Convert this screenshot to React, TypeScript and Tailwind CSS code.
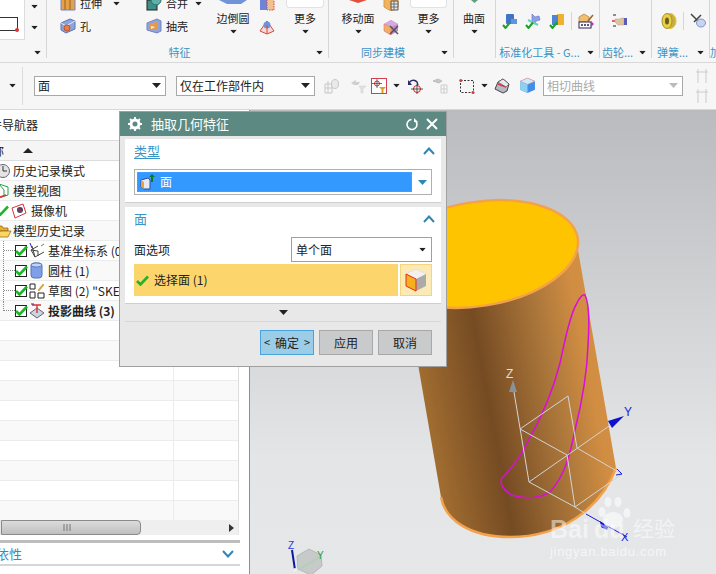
import { type ReactNode } from "react";

const Caret = ({ className = "" }: { className?: string }) => (
  <svg width="9" height="5" viewBox="0 0 9 5" className={`shrink-0 ${className}`}>
    <path d="M0 0h9L4.500 5z" fill="#222" />
  </svg>
);

const Chevron = ({ down = false }: { down?: boolean }) => (
  <svg width="12" height="8" viewBox="0 0 12 8" className="shrink-0">
    <path d={down ? "M1 1l5 5.500L11 1" : "M1 7l5-5.500L11 7"} fill="none" stroke="#2f86b5" strokeWidth="2" />
  </svg>
);

const Ic = ({ children, className = "" }: { children: ReactNode; className?: string }) => (
  <svg width="16" height="16" viewBox="0 0 16 16" className={`shrink-0 ${className}`}>{children}</svg>
);

const GreenTick = () => <path d="M1 12l2.500 3L8 9.500" fill="none" stroke="#1f9f2a" strokeWidth="2" />;

// ribbon icons
const IconExtrude = () => (
  <Ic>
    <path d="M1 1h14v14H1z" fill="#e3a24a" stroke="#6f84c8" />
    <path d="M5 1v14M10 1v14" stroke="#b5762a" strokeWidth="1.500" />
  </Ic>
);
const IconHole = () => (
  <Ic>
    <path d="M1 5l9-4 5 2v8l-9 4-5-3z" fill="#8ea4de" stroke="#5f74b0" />
    <path d="M1 5l5 3 9-5" fill="none" stroke="#dfe6f8" />
    <circle cx="7" cy="10" r="3" fill="#e8803a" stroke="#c05030" />
  </Ic>
);
const IconUnite = () => (
  <Ic>
    <rect x="1" y="5" width="10" height="10" fill="#3d8f88" stroke="#222" />
    <circle cx="10" cy="5" r="5" fill="#5fb0a8" stroke="#2a6f6a" />
  </Ic>
);
const IconShell = () => (
  <Ic>
    <path d="M1 5l10-4 4 2v10l-4 2-10-3z" fill="#8ea4de" stroke="#6f84c8" />
    <path d="M4 6l8-3v9l-8-1z" fill="#e59a4a" />
    <path d="M5 8l4 1-4 2z" fill="#fff2d8" />
  </Ic>
);
const IconEdge = () => (
  <Ic>
    <path d="M1 5h8v10H1z" fill="#6f84d8" />
    <path d="M8 3h7v12H8z" fill="#f0c090" stroke="#d84a3a" strokeDasharray="1.500 1" />
    <path d="M1 5l3-3h8l-3 3z" fill="#d8a0b0" />
  </Ic>
);
const IconCone = () => (
  <Ic>
    <path d="M8 2L1 12l7 3 7-3z" fill="#f5d8d8" stroke="#d84a3a" />
    <circle cx="8" cy="6" r="3.500" fill="#6f94d8" />
    <path d="M8 6v9" stroke="#d84a3a" />
  </Ic>
);
const IconMoveTop = () => (
  <Ic>
    <path d="M1 3l7-3 7 3v9l-7 4-7-4z" fill="#f2b25a" stroke="#d89a4a" />
    <path d="M8 6h7v9H8z" fill="#e8e8e8" stroke="#555" />
    <path d="M8 9h7M8 12h7M11 6v9" stroke="#555" strokeWidth=".8" />
  </Ic>
);
const IconDeleteFace = () => (
  <Ic>
    <path d="M1 5l7-4 7 4v7l-7 4-7-4z" fill="#c58ac8" />
    <path d="M1 5l7-4 7 4-7 3z" fill="#d8a8e0" />
    <path d="M1 5l7 3v8l-7-4z" fill="#efb060" stroke="#e8809a" strokeWidth=".7" />
    <path d="M7 7l8 8M15 7l-8 8" stroke="#555" strokeWidth="1.500" />
  </Ic>
);
const IconStd1 = () => (
  <Ic>
    <rect x="4" y="1" width="8" height="10" rx="1" fill="#3f74c8" />
    <path d="M9 6h6v5H9z" fill="#5f94e0" />
    <GreenTick />
  </Ic>
);
const IconStd2 = () => (
  <Ic>
    <path d="M7 1l3 3 4-1 1 4-4 1-1 3-3-2z" fill="#8f9fe8" stroke="#5f6fc8" strokeWidth=".6" />
    <path d="M3 7l10 5" stroke="#68d0c0" strokeWidth="2" />
    <GreenTick />
  </Ic>
);
const IconStd3 = () => (
  <Ic>
    <path d="M8 1h7v11H8z" fill="#f0b030" />
    <path d="M3 2h6v10H3z" fill="#4f84d0" />
    <GreenTick />
  </Ic>
);
const IconStd4 = () => (
  <svg width="17" height="17" viewBox="0 0 17 17" className="shrink-0">
    <path d="M1 4l5-3 5 3v5H1z" fill="#eebf70" stroke="#c89a50" />
    <rect x="1" y="9" width="12" height="6" fill="#fff" stroke="#332255" />
    <path d="M3 12h2M6 12h2M9 12h2" stroke="#332255" strokeWidth="1.500" />
    <path d="M13 8l3 3-3 3z" fill="#c030c0" />
    <path d="M10 8l5-6" stroke="#a06030" strokeWidth="1.500" />
  </svg>
);
const IconGear = () => (
  <Ic>
    <path d="M1 2h3M1 13h3" stroke="#222" />
    <path d="M0 8h4" stroke="#d33" strokeWidth="1.500" />
    <path d="M3 6h5l1-1h3v7H6L3 9z" fill="#dcc4a0" stroke="#b8a080" strokeWidth=".5" />
    <rect x="12" y="5" width="3" height="7" fill="#5a5ab8" />
  </Ic>
);
const IconSpring = () => (
  <Ic>
    <ellipse cx="9" cy="8" rx="6" ry="7.500" fill="#c8b040" stroke="#e0c030" />
    <ellipse cx="6" cy="8" rx="5" ry="7.500" fill="#e8d040" stroke="#a89030" />
    <ellipse cx="6" cy="8" rx="2" ry="3.500" fill="#6a5a2a" />
  </Ic>
);
const IconScissor = () => (
  <Ic>
    <path d="M1 1l10 10M11 2L4 9" stroke="#444" strokeWidth="1.500" />
    <ellipse cx="11" cy="10" rx="4.500" ry="4" fill="#c8d4ee" stroke="#7f94c8" />
  </Ic>
);

function Group({ width, label, children, caret = true }: { width: number; label?: string; children?: ReactNode; caret?: boolean }) {
  return (
    <div className="relative h-[58px] shrink-0 border-r border-[#d6d6d6]" style={{ width }}>
      <div className="flex h-[46px] overflow-hidden">{children}</div>
      <div className="flex h-[12px] items-center justify-center whitespace-nowrap pr-[16px] text-[11px] leading-none text-[#3b93c7]">
        {label}
      </div>
      {caret && <Caret className="absolute bottom-[3px] right-[4px] scale-75" />}
    </div>
  );
}

const BigBtn = ({ text, w, ml, box = false, top }: { text: string; w: number; ml: number; box?: boolean; top?: ReactNode }) => (
  <div className="flex shrink-0 flex-col items-center whitespace-nowrap" style={{ width: w, marginLeft: ml }}>
    <div className={`flex h-[8px] w-full justify-center overflow-hidden ${box ? "rounded-b border border-t-0 border-[#e2e2e2] bg-white" : ""}`}>{top}</div>
    <div className="mt-[3px] text-[11px] leading-[14px] text-[#222]">{text}</div>
    <Caret className="mt-[4px] scale-75" />
  </div>
);

const SmallRow = ({ icon, text, children }: { icon: ReactNode; text: string; children?: ReactNode }) => (
  <div className="flex h-[14px] items-center gap-[4px] whitespace-nowrap text-[11px]">
    {icon}
    {text}
    {children}
  </div>
);

function Ribbon() {
  return (
    <div className="flex h-[62px] shrink-0 overflow-hidden bg-[#f6f6f6] text-[#222]">
      <Group width={47}>
        <div className="flex w-full">
          <div className="-mt-[4px] h-[44px] w-[25px] border border-l-0 border-[#dcdcdc] bg-white pt-[20px]">
            <div className="relative h-[14px] w-[18px] border-y border-r border-[#333]">
              <span className="absolute -bottom-[2px] -right-[2px] h-[4px] w-[4px] rounded-full bg-[#d33]" />
            </div>
          </div>
          <div className="ml-[5px] flex flex-col gap-[16px] pt-[4px]">
            <Caret className="scale-75" />
            <Caret className="scale-75" />
          </div>
        </div>
      </Group>
      <Group width={282} label="特征">
        <div className="-mt-[4px] ml-[13px] flex w-[86px] shrink-0 flex-col gap-[9px]">
          <SmallRow icon={<IconExtrude />} text="拉伸"><Caret className="ml-[6px] scale-75" /></SmallRow>
          <SmallRow icon={<IconHole />} text="孔" />
        </div>
        <div className="-mt-[4px] flex w-[68px] shrink-0 flex-col gap-[9px]">
          <SmallRow icon={<IconUnite />} text="合并"><Caret className="ml-[2px] scale-75" /></SmallRow>
          <SmallRow icon={<IconShell />} text="抽壳" />
        </div>
        <BigBtn
          text="边倒圆"
          w={34}
          ml={2}
          top={<svg width="28" height="5" viewBox="0 0 28 5" className="shrink-0"><path d="M0 0h28l-6 4H8z" fill="#6f94d8" /></svg>}
        />
        <div className="-mt-[5px] ml-[9px] flex w-[16px] shrink-0 flex-col gap-[8px]">
          <IconEdge />
          <IconCone />
        </div>
        <BigBtn text="更多" w={38} ml={11} box />
      </Group>
      <Group width={125} label="同步建模">
        <BigBtn
          text="移动面"
          w={36}
          ml={11}
          top={<svg width="18" height="3" viewBox="0 0 18 3" className="shrink-0"><path d="M0 0h18l-9 3z" fill="#e0503a" /></svg>}
        />
        <div className="-mt-[5px] ml-[7px] flex w-[16px] shrink-0 flex-col gap-[8px]">
          <IconMoveTop />
          <IconDeleteFace />
        </div>
        <BigBtn text="更多" w={37} ml={11} box />
      </Group>
      <Group width={42} caret={false}>
        <BigBtn
          text="曲面"
          w={30}
          ml={5}
          top={<svg width="7" height="3" viewBox="0 0 7 3" className="shrink-0"><path d="M0 0h7L3.500 3z" fill="#5fa080" /></svg>}
        />
      </Group>
      <Group width={104} label="标准化工具 - G...">
        <div className="flex items-center pb-[4px] pl-[6px]">
          <IconStd1 />
          <span className="ml-[7px]"><IconStd2 /></span>
          <span className="ml-[8px]"><IconStd3 /></span>
          <span className="ml-[6px] h-[18px] w-px bg-[#d6d6d6]" />
          <span className="ml-[6px]"><IconStd4 /></span>
        </div>
      </Group>
      <Group width={52} label="齿轮...">
        <div className="flex items-center pb-[4px] pl-[12px]">
          <IconGear />
        </div>
      </Group>
      <Group width={58} label="弹簧...">
        <div className="flex items-center pb-[4px] pl-[9px]">
          <IconSpring />
          <span className="ml-[6px] h-[18px] w-px bg-[#d6d6d6]" />
          <span className="ml-[6px]"><IconScissor /></span>
        </div>
      </Group>
      <div className="w-[7px] shrink-0 overflow-hidden whitespace-nowrap pt-[46px] text-[11px] leading-[12px] text-[#3b93c7]">加</div>
    </div>
  );
}

const Select = ({ text, w, ml, disabled = false }: { text: string; w: number; ml: number; disabled?: boolean }) => (
  <div
    className={`flex h-[20px] shrink-0 items-center justify-between border border-[#a8a8a8] bg-white pl-[3px] pr-[4px] text-[12px] ${disabled ? "text-[#aaa]" : "text-[#222]"}`}
    style={{ width: w, marginLeft: ml }}
  >
    {text}
    <Caret className={disabled ? "opacity-30" : ""} />
  </div>
);

function Toolbar() {
  return (
    <div className="flex h-[48px] shrink-0 items-center border-y border-y-[#d8d8d8] bg-[#f6f6f6] pb-[1px]">
      <span className="ml-[-4px] w-[10px] text-[12px] text-[#222]">)</span>
      <Caret className="ml-[2px] scale-75" />
      <span className="ml-[5px] h-[38px] w-px bg-[#dcdcdc]" />
      <Select text="面" w={132} ml={11} />
      <Select text="仅在工作部件内" w={139} ml={10} />
      <Ic className="ml-[9px] opacity-50">
        <path d="M1 6h7v9H1zM1 10h7M4 3v12" fill="none" stroke="#999" />
        <ellipse cx="11" cy="6" rx="3.500" ry="4.500" fill="#ddd" stroke="#999" />
      </Ic>
      <Ic className="ml-[11px] opacity-50">
        <path d="M0 5l5-3v2h4l-2 3H3" fill="#aaa" />
        <path d="M8 8h7l-3 3v4h-2v-4z" fill="#ccc" stroke="#aaa" strokeWidth=".5" />
      </Ic>
      <span className="ml-[4px] flex h-[16px] w-[16px] shrink-0 items-center justify-center border border-[#d04050] bg-white">
        <svg width="14" height="14" viewBox="0 0 14 14">
          <circle cx="5" cy="4.500" r="2.500" fill="none" stroke="#c33" />
          <path d="M5 0v9M0 4.500h10" stroke="#333" strokeWidth=".7" />
          <path d="M7 8h7l-2.500 2.500V14h-2v-3.500z" fill="#e0a020" />
        </svg>
      </span>
      <Caret className="ml-[5px] scale-75" />
      <Ic className="ml-[7px]">
        <circle cx="9" cy="11" r="3.500" fill="none" stroke="#d22" />
        <path d="M9 6v10M3 11h12" stroke="#333" strokeWidth=".8" />
        <path d="M1 6a4.500 4.500 0 0 1 8-2l1 3" fill="none" stroke="#2a2a6a" strokeWidth="1.400" />
        <path d="M0 2v5h4z" fill="#2a2a6a" />
      </Ic>
      <Ic className="ml-[8px] opacity-50">
        <path d="M1 3l5-2 4 2-3 2z" fill="#999" stroke="#888" />
        <path d="M9 7h6v8H9zM12 7v8M9 11h6" fill="none" stroke="#aaa" />
      </Ic>
      <Ic className="ml-[11px]">
        <rect x="1.500" y="2.500" width="13" height="12" fill="none" stroke="#333" strokeDasharray="2 1.500" />
        <circle cx="1.800" cy="2.500" r="1.500" fill="#d33" />
        <circle cx="14" cy="14.500" r="1.500" fill="#d33" />
      </Ic>
      <Caret className="ml-[5px] scale-75" />
      <Ic className="ml-[5px]">
        <path d="M1 11l3-7 5-3 6 5-2 7-4 2z" fill="#b8b8c4" stroke="#444" />
        <path d="M4 6l8 3" stroke="#e03040" strokeWidth="1.500" />
        <path d="M4 4l5-3 6 5-3 3z" fill="#e8e8ee" stroke="#444" strokeWidth=".6" />
      </Ic>
      <svg width="17" height="17" viewBox="0 0 16 16" className="ml-[9px] shrink-0">
        <path d="M8 1l7 3v8l-7 3-7-3V4z" fill="#3f8fe8" />
        <path d="M8 1l7 3-7 3-7-3z" fill="#cfeaf8" stroke="#e08090" strokeWidth=".5" />
        <path d="M1 4l7 3v8l-7-3z" fill="#8fd0f0" />
      </svg>
      <Select text="相切曲线" w={140} ml={7} disabled />
      <div className="ml-[11px] flex flex-col gap-[4px]">
        <Ic><path d="M4 1v14M12 1v14M2 4h12" stroke="#ccc" /></Ic>
        <Ic><path d="M4 1v14M12 1v14M2 4h12" stroke="#ccc" /></Ic>
      </div>
    </div>
  );
}

type Row = { text: string; bold?: boolean; kind: "top" | "cam" | "child"; icon: ReactNode; last?: boolean };

const rows: Row[] = [
  { text: "历史记录模式", kind: "top", icon: <Ic><circle cx="6" cy="8" r="6.500" fill="#e4e4e4" stroke="#667" /><path d="M6 3v5h4" stroke="#333" fill="none" /></Ic> },
  { text: "模型视图", kind: "top", icon: <Ic><path d="M2 1l9 3v8l-9 3z" fill="#fff" stroke="#2a9f4a" /><path d="M2 1l5 6v6" fill="none" stroke="#2a9f4a" /><path d="M0 15l9-3" stroke="#d33" strokeWidth="1.500" /></Ic> },
  { text: "摄像机", kind: "cam", icon: <Ic><path d="M1 5l11-4 3 9-11 5z" fill="#fff" stroke="#d33" /><circle cx="9" cy="7" r="3" fill="#446" /><path d="M6 5l5 4" stroke="#d33" /></Ic> },
  { text: "模型历史记录", kind: "top", icon: <Ic><path d="M0 3h5l1 2h5v3H3L1 14H0z" fill="#e8b030" stroke="#8a6010" strokeWidth=".7" /><path d="M1 14l2-6h11l-3 6z" fill="#f8d860" stroke="#8a6010" strokeWidth=".7" /></Ic> },
  { text: "基准坐标系 (0)", kind: "child", icon: <Ic><path d="M3 3l3 11 9-5M6 14L2 7l7 1v5M2 7l7-4" fill="none" stroke="#444" /><path d="M1 0l2 5" stroke="#22c" /><path d="M12 3l3-2" stroke="#2a2" /></Ic> },
  { text: "圆柱 (1)", kind: "child", icon: <svg width="13" height="17" viewBox="0 0 13 17" className="shrink-0"><rect x="1" y="1" width="11" height="15" rx="3" fill="#7f9fe8" stroke="#5577bb" /><ellipse cx="6.500" cy="3" rx="5.500" ry="2" fill="#c0d4f5" stroke="#5577bb" /></svg> },
  { text: "草图 (2) \"SKETCH_000\"", kind: "child", icon: <Ic><path d="M1 1h5v5H1zM1 9h5v6H1zM9 10h6v5H9z" fill="#fff" stroke="#222" /><path d="M9 7l5-6 1 1-5 6z" fill="#e8b030" stroke="#a07010" strokeWidth=".4" /></Ic> },
  { text: "投影曲线 (3)", kind: "child", bold: true, last: true, icon: <Ic><path d="M1 10l7-5 7 5-7 5z" fill="#c8d4e0" stroke="#667" /><path d="M3 2h9M8 2v8" stroke="#d33" strokeWidth="1.400" /><path d="M2 1h3" stroke="#22c" /></Ic> },
];

const Check = () => (
  <svg width="13" height="11" viewBox="0 0 13 11" className="shrink-0">
    <path d="M1 6l3.500 3.500L12 1.500" fill="none" stroke="#1fb52a" strokeWidth="2.600" />
  </svg>
);

function Navigator() {
  return (
    <div className="flex h-[464px] w-[250px] shrink-0 flex-col overflow-hidden border-r border-[#8f8f8f] bg-white">
      <div className="flex h-[30px] shrink-0 items-center text-[12px] text-[#222]">
        <span className="ml-[-10px] whitespace-nowrap">件导航器</span>
      </div>
      <div className="flex h-[21px] w-[239px] shrink-0 items-center border-y border-[#dcdcdc] bg-[#f5f5f5] text-[12px] text-[#222]">
        <span className="ml-[-20px] whitespace-nowrap">名称</span>
        <svg width="10" height="5" viewBox="0 0 10 5" className="ml-[19px]"><path d="M0 5h10L5 0z" fill="#222" /></svg>
      </div>
      <div className="h-[359px] w-[239px] shrink-0 overflow-hidden border-r border-[#dcdcdc]">
        {Array.from({ length: 18 }).map((_, i) => {
          const r = rows[i];
          return (
            <div key={i} className={`flex h-[20px] items-center border-b border-[#ececec] ${i % 2 ? "bg-[#f9f9f9]" : "bg-white"}`}>
              <div className="flex h-full w-[174px] shrink-0 items-center overflow-hidden whitespace-nowrap border-r border-[#ececec] text-[12px] text-[#222]">
                {r?.kind === "top" && (
                  <div className="ml-[-3px] flex items-center">
                    {r.icon}
                    <span>{r.text}</span>
                  </div>
                )}
                {r?.kind === "cam" && (
                  <div className="ml-[-4px] flex items-center">
                    <Check />
                    <span className="ml-[2px]">{r.icon}</span>
                    <span className="ml-[4px]">{r.text}</span>
                  </div>
                )}
                {r?.kind === "child" && (
                  <div className={`ml-[3px] flex h-full items-center ${r.bold ? "font-bold" : ""}`}>
                    <span className={`w-[12px] shrink-0 border-l border-dotted border-[#888] ${r.last ? "h-[10px] self-start" : "flex h-full items-center"}`}>
                      {!r.last && <span className="w-full border-t border-dotted border-[#888]" />}
                      {r.last && <span className="mt-[9px] block w-full border-t border-dotted border-[#888]" />}
                    </span>
                    <span className="flex h-[12px] w-[12px] shrink-0 items-center justify-center border border-[#222] bg-white"><Check /></span>
                    <span className="ml-[2px] flex w-[15px] justify-center">{r.icon}</span>
                    <span className="ml-[4px]">{r.text}</span>
                  </div>
                )}
              </div>
            </div>
          );
        })}
      </div>
      <div className="flex h-[15px] w-[239px] shrink-0 items-center border-x border-[#e6e6e6] bg-[#efefef]">
        <div className="flex h-[15px] w-[140px] items-center justify-end rounded-r-sm border border-[#8a8a8a] bg-gradient-to-b from-[#dcdcdc] to-[#bfbfbf] pr-[69px]">
          <svg width="8" height="7" viewBox="0 0 8 7"><path d="M1 0v7M4 0v7M7 0v7" stroke="#777" /></svg>
        </div>
        <svg width="5" height="8" viewBox="0 0 5 8" className="ml-[88px]"><path d="M0 0l5 4-5 4z" fill="#333" /></svg>
      </div>
      <div className="mt-[5px] h-[3px] w-[240px] shrink-0 bg-[#bdbdbd]" />
      <div className="flex h-[23px] w-[240px] shrink-0 items-center justify-between border-b-2 border-[#d6d6d6] pr-[6px] text-[13px] text-[#2f8fc4]">
        <span className="ml-[-17px] whitespace-nowrap">相依性</span>
        <Chevron down />
      </div>
    </div>
  );
}

function Scene() {
  return (
    <svg viewBox="250 110 466 464" className="absolute inset-0 h-full w-full">
      <defs>
        <linearGradient id="bg" x1="0" y1="0" x2="0" y2="1">
          <stop offset="0" stopColor="#b9bbbe" />
          <stop offset="0.75" stopColor="#e4e5e7" />
          <stop offset="1" stopColor="#e6e7e9" />
        </linearGradient>
        <linearGradient id="cyl" gradientUnits="userSpaceOnUse" x1="425" y1="400" x2="610" y2="365">
          <stop offset="0" stopColor="#a06c30" />
          <stop offset="0.33" stopColor="#754b23" />
          <stop offset="0.7" stopColor="#b07a3c" />
          <stop offset="0.88" stopColor="#d18d42" />
          <stop offset="1" stopColor="#d39045" />
        </linearGradient>
      </defs>
      <rect x="250" y="110" width="466" height="464" fill="url(#bg)" />
      <path d="M400 260 L578 250 L616 468 C600 510 560 537 510 537 C470 537 445 520 441 497 Z" fill="url(#cyl)" />
      <path d="M441 497C445 520 470 537 510 537C560 537 600 510 616 468" fill="none" stroke="#f4a24a" strokeWidth="2.500" />
      <ellipse cx="478" cy="254" rx="101" ry="52" transform="rotate(-9 478 254)" fill="#ffc400" stroke="#f4a24a" strokeWidth="2.500" />
      <path
        d="M585 295C590 305 589 330 588 345C587 375 580 410 575 430C570 455 565 475 550 492C540 498 525 500 512 495C504 491 499 484 502 478C510 470 520 458 527 443C540 420 552 395 560 363C565 340 570 315 577 303C580 297 583 294 585 295Z"
        fill="none"
        stroke="#d80fd8"
        strokeWidth="1.500"
      />
      <path
        d="M529 482L514 392M520 429L568 396L577 448L622 474L575 507L529 482M520 429L567 455L575 507M529 482L612 424M575 507L586 514"
        fill="none"
        stroke="#d4d4d4"
        strokeWidth="1"
      />
      <path d="M513 380l-4 12h8z" fill="#8a9298" />
      <path d="M624 416l-16 5 4 7z" fill="#1010d0" />
      <path d="M622 474l-5-5M622 474l-6 1M586 514l41 23" fill="none" stroke="#1818e0" strokeWidth="1" />
      <path d="M608 527l-8-6 1 6 6 3z" fill="#1010d0" />
      <text x="506" y="378" fontSize="12" fill="#ddd" fontFamily="Liberation Sans, sans-serif">Z</text>
      <text x="624" y="416" fontSize="12" fill="#2020e0" fontFamily="Liberation Sans, sans-serif">Y</text>
      <text x="621" y="541" fontSize="11" fill="#2020e0" fontFamily="Liberation Sans, sans-serif">X</text>
      <g fill="#fff" fillOpacity="0.55">
        <ellipse cx="613" cy="520" rx="10" ry="8" />
        <ellipse cx="602" cy="512" rx="3.500" ry="5" />
        <ellipse cx="608" cy="502" rx="3.500" ry="5" />
        <ellipse cx="618" cy="502" rx="3.500" ry="5" />
        <ellipse cx="627" cy="513" rx="3.500" ry="5" />
      </g>
      <text x="550" y="538" fontSize="25" fontWeight="700" fill="#fff" fillOpacity="0.5" fontFamily="Liberation Sans, sans-serif">Bai</text>
      <text x="594" y="538" fontSize="25" fontWeight="700" fill="#fff" fillOpacity="0.5" fontFamily="Liberation Sans, sans-serif">du</text>
      <text x="633" y="536" fontSize="21" fill="#fff" fillOpacity="0.55" fontFamily="Noto Sans CJK SC, sans-serif">经验</text>
      <text x="550" y="556" fontSize="13" letterSpacing="0.700" fill="#fff" fillOpacity="0.65" fontFamily="Liberation Sans, sans-serif">jingyan.baidu.com</text>
      <path d="M297 556l12-7 12 6 1 11-11 9-13-6z" fill="#c6cac8" stroke="#b5b8b8" />
      <path d="M298 570l22-13" stroke="#b5cfb5" strokeWidth="1.500" />
      <path d="M292 550l3 20" stroke="#1018a0" strokeWidth="2" />
      <circle cx="295" cy="570" r="2" fill="#eee" />
      <text x="288" y="549" fontSize="10" fill="#2040e0" fontFamily="Liberation Sans, sans-serif">Z</text>
      <text x="317" y="559" fontSize="10" fill="#30a030" fontFamily="Liberation Sans, sans-serif">Y</text>
    </svg>
  );
}

const DlgButton = ({ children, primary = false }: { children: ReactNode; primary?: boolean }) => (
  <div className={`flex h-[25px] w-[54px] items-center justify-center border text-[12px] text-[#222] ${primary ? "border-[#4aa3d8] bg-[#9ccde8]" : "border-[#a8a8a8] bg-[#c8cacc]"}`}>
    {children}
  </div>
);

function Dialog() {
  return (
    <div className="absolute left-[119px] top-[1px] flex h-[256px] w-[328px] flex-col border border-[#a0a0a0] bg-[#e8e8e8] text-[12px] text-[#222]">
      <div className="flex h-[24px] shrink-0 items-center bg-[#5c8a82] px-[8px] text-[13px] text-white">
        <svg width="14" height="14" viewBox="0 0 14 14" className="shrink-0">
          <circle cx="7" cy="7" r="4" fill="none" stroke="#fff" strokeWidth="3" />
          <path d="M7 0v3M7 11v3M0 7h3M11 7h3M2 2l2 2M10 10l2 2M12 2l-2 2M4 10l-2 2" stroke="#fff" strokeWidth="1.800" />
        </svg>
        <span className="ml-[9px] flex-1">抽取几何特征</span>
        <svg width="13" height="13" viewBox="0 0 13 13" className="mr-[8px]">
          <path d="M10 2.500A5 5 0 1 1 6.500 1.500" fill="none" stroke="#fff" strokeWidth="1.600" />
          <path d="M9 0v4h4z" fill="#fff" />
        </svg>
        <svg width="12" height="12" viewBox="0 0 12 12"><path d="M1 1l10 10M11 1L1 11" stroke="#fff" strokeWidth="2" /></svg>
      </div>
      <div className="mx-[5px] mt-[3px] h-[64px] shrink-0 border-b border-[#cfcfcf] bg-white px-[9px] pt-[2px]">
        <div className="flex h-[20px] items-center justify-between text-[13px] text-[#3b93c7]">
          <span className="underline decoration-[#3b93c7] underline-offset-2">类型</span>
          <span className="-mr-[3px]"><Chevron /></span>
        </div>
        <div className="mt-[8px] flex h-[26px] items-center border border-[#b0b0b0] pl-[2px]">
          <div className="flex h-[20px] w-[275px] items-center border border-dotted border-[#c88a40] bg-[#3399ff] pl-[2px] text-white">
            <svg width="16" height="16" viewBox="0 0 16 16" className="shrink-0">
              <path d="M1 6l7-2 2 2v9H4l-3-2z" fill="#e8e8f0" stroke="#2a4fa0" />
              <path d="M1 6l3 2v7l-3-2z" fill="#f0a030" />
              <path d="M11 8V3H9l3-3 3 3h-2v5z" fill="#0d7a20" />
            </svg>
            <span className="ml-[4px]">面</span>
          </div>
          <svg width="9" height="5" viewBox="0 0 9 5" className="ml-[6px]"><path d="M0 0h9L4.500 5z" fill="#2f86b5" /></svg>
        </div>
      </div>
      <div className="mx-[5px] mt-[4px] h-[97px] shrink-0 border-b border-[#cfcfcf] bg-white px-[9px] pt-[2px]">
        <div className="flex h-[20px] items-center justify-between text-[13px] text-[#3b93c7]">
          <span>面</span>
          <span className="-mr-[3px]"><Chevron /></span>
        </div>
        <div className="mt-[8px] flex h-[25px] items-center justify-between">
          <span>面选项</span>
          <div className="flex h-[25px] w-[141px] items-center justify-between border border-[#a0a0a0] px-[4px]">
            单个面
            <Caret className="scale-75" />
          </div>
        </div>
        <div className="mt-[2px] flex h-[32px] gap-[2px]">
          <div className="flex flex-1 items-center bg-[#fcd56c] pl-[2px]">
            <Check />
            <span className="ml-[5px]">选择面 (1)</span>
          </div>
          <div className="flex w-[32px] items-center justify-center border border-[#f5d67f] bg-[#fbeab5]">
            <svg width="22" height="24" viewBox="0 0 22 24">
              <path d="M11 1l10 5v12l-10 5-10-5V6z" fill="#aaa" />
              <path d="M11 1l10 5-10 5L1 6z" fill="#f5f0f0" />
              <path d="M1 6l10 5v12L1 18z" fill="#f5b020" stroke="#e83010" />
            </svg>
          </div>
        </div>
      </div>
      <div className="flex h-[17px] shrink-0 items-center justify-center">
        <Caret />
      </div>
      <div className="mx-[5px] flex flex-1 justify-end gap-[5px] border-t border-[#d6d6d6] pr-[9px] pt-[8px]">
        <DlgButton primary>
          <span className="flex w-full items-center justify-between px-[3px] text-[11px]"><span>&lt;</span><span className="text-[12px]">确定</span><span>&gt;</span></span>
        </DlgButton>
        <DlgButton>应用</DlgButton>
        <DlgButton>取消</DlgButton>
      </div>
    </div>
  );
}

export default function App() {
  return (
    <div className="flex h-[574px] w-[716px] flex-col overflow-hidden bg-white font-['Noto_Sans_CJK_SC','Liberation_Sans',sans-serif]">
      <Ribbon />
      <Toolbar />
      <div className="relative flex flex-1">
        <Navigator />
        <div className="relative flex-1">
          <Scene />
        </div>
        <Dialog />
      </div>
    </div>
  );
}
